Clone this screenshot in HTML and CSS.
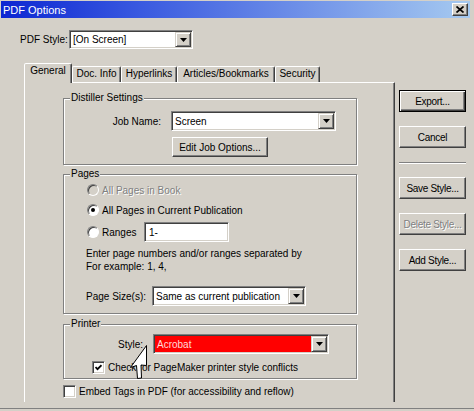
FILE: index.html
```html
<!DOCTYPE html>
<html>
<head>
<meta charset="utf-8">
<link rel="stylesheet" href="styles.css">
</head>
<body>
<div class="window">
  <div class="titlebar">
    <span class="title">PDF Options</span>
    <span class="close-btn"><svg width="8" height="7" viewBox="0 0 8 7"><path d="M0.5 0.5L7.5 6.5M7.5 0.5L0.5 6.5" stroke="#000" stroke-width="1.7" fill="none"/></svg></span>
  </div>

  <div class="style-row">
    <span class="lbl">PDF Style:</span>
    <div class="select sel-style">
      <span class="sel-text">[On Screen]</span>
      <span class="drop"><svg width="7" height="4" viewBox="0 0 7 4"><path d="M0 0H7L3.5 4Z" fill="#000"/></svg></span>
    </div>
  </div>

  <div class="main">
    <div class="tabs">
      <div class="tabstrip">
        <div class="tab active t-general">General</div>
        <div class="tab t-doc">Doc. Info</div>
        <div class="tab t-hyper">Hyperlinks</div>
        <div class="tab t-art">Articles/Bookmarks</div>
        <div class="tab t-sec">Security</div>
      </div>
      <div class="panel">
        <div class="group g-distiller">
          <div class="group-title">Distiller Settings</div>
          <div class="job-row">
            <span class="lbl-r">Job Name:</span>
            <div class="select sel-job">
              <span class="sel-text">Screen</span>
              <span class="drop"><svg width="7" height="4" viewBox="0 0 7 4"><path d="M0 0H7L3.5 4Z" fill="#000"/></svg></span>
            </div>
          </div>
          <div class="btn btn-edit">Edit Job Options...</div>
        </div>

        <div class="group g-pages">
          <div class="group-title">Pages</div>
          <div class="radio-row">
            <span class="radio disabled"></span>
            <span class="disabled-text">All Pages in Book</span>
          </div>
          <div class="radio-row">
            <span class="radio on"></span>
            <span>All Pages in Current Publication</span>
          </div>
          <div class="radio-row range-row">
            <span class="radio"></span>
            <span class="range-lbl">Ranges</span>
            <div class="inp inp-range">1-</div>
          </div>
          <div class="hint">Enter page numbers and/or ranges separated by<br>For example: 1, 4,</div>
          <div class="size-row">
            <span class="lbl size-lbl">Page Size(s):</span>
            <div class="select sel-size">
              <span class="sel-text">Same as current publication</span>
              <span class="drop"><svg width="7" height="4" viewBox="0 0 7 4"><path d="M0 0H7L3.5 4Z" fill="#000"/></svg></span>
            </div>
          </div>
        </div>

        <div class="group g-printer">
          <div class="group-title">Printer</div>
          <div class="pstyle-row">
            <span class="lbl-r pstyle-lbl">Style:</span>
            <div class="select sel-printer">
              <span class="sel-text">Acrobat</span>
              <span class="drop"><svg width="7" height="4" viewBox="0 0 7 4"><path d="M0 0H7L3.5 4Z" fill="#000"/></svg></span>
            </div>
          </div>
          <div class="check-row">
            <span class="check"><svg width="7" height="7" viewBox="0 0 7 7"><polyline points="0.5,3 2.5,5.2 6.5,1.2" stroke="#000" stroke-width="1.8" fill="none"/></svg></span>
            <span>Check for PageMaker printer style conflicts</span>
          </div>
        </div>

        <div class="embed-row">
          <span class="check"></span>
          <span>Embed Tags in PDF (for accessibility and reflow)</span>
        </div>
      </div>
    </div>

    <div class="side">
      <div class="btn default">Export...</div>
      <div class="btn">Cancel</div>
      <div class="sep"></div>
      <div class="btn">Save Style...</div>
      <div class="btn disabled-text">Delete Style...</div>
      <div class="btn">Add Style...</div>
    </div>
  </div>

  <svg class="cursor" width="20" height="36" viewBox="0 0 20 36"><polygon points="17.5,1.5 1.5,23.5 7.5,21.5 8.5,34.5 12.5,34 12,21 17.5,21.5" fill="#fff" stroke="#000" stroke-width="1"/></svg>
</div>
</body>
</html>
```

FILE: styles.css
```css
html, body {
  margin: 0;
  background: #d4d0c8;
}
body {
  font-family: "Liberation Sans", Arial, sans-serif;
  font-size: 10px;
  color: #000;
}
.window {
  position: relative;
  width: 474px;
  height: 409px;
  box-sizing: border-box;
  padding-top: 1px;
  border-bottom: 1px solid #808080;
  background: #d4d0c8;
}
.titlebar {
  height: 17px;
  margin: 0 4px 0 1px;
  background: linear-gradient(90deg, #0c26d2 0%, #3a5ae0 30%, #a6caf0 100%);
  display: flex;
  align-items: center;
  justify-content: space-between;
}
.title {
  color: #fff;
  font-size: 11px;
  padding-left: 2px;
}
.close-btn {
  width: 16px;
  height: 13px;
  box-sizing: border-box;
  margin-right: 2px;
  background: #d4d0c8;
  border: 1px solid;
  border-color: #fff #404040 #404040 #fff;
  box-shadow: inset -1px -1px 0 #808080;
  display: flex;
  align-items: center;
  justify-content: center;
}
.style-row {
  display: flex;
  align-items: center;
  height: 19px;
  margin: 12px 0 0 20px;
}
.style-row .lbl {
  width: 49px;
}
.select {
  display: flex;
  box-sizing: border-box;
  border: 1px solid;
  border-color: #808080 #fff #fff #808080;
  box-shadow: inset 1px 1px 0 #404040, inset -1px -1px 0 #d4d0c8;
  padding: 1px;
  background: #fff;
}
.sel-text {
  flex: 1;
  display: flex;
  align-items: center;
  padding-left: 2px;
  white-space: nowrap;
  overflow: hidden;
}
.drop {
  width: 16px;
  box-sizing: border-box;
  background: #d4d0c8;
  border: 1px solid;
  border-color: #d4d0c8 #404040 #404040 #d4d0c8;
  box-shadow: inset 1px 1px 0 #fff, inset -1px -1px 0 #808080;
  display: flex;
  align-items: center;
  justify-content: center;
}
.sel-style {
  width: 124px;
  height: 19px;
}
.main {
  display: flex;
  margin: 14px 0 0 24px;
}
.tabs {
  width: 371px;
}
.tabstrip {
  display: flex;
  align-items: flex-end;
  height: 19px;
}
.tab {
  box-sizing: border-box;
  height: 16px;
  border: 1px solid;
  border-bottom: none;
  border-color: #fff #404040 transparent #fff;
  box-shadow: inset -1px 0 0 #808080;
  border-radius: 2px 2px 0 0;
  text-align: center;
  line-height: 13px;
  white-space: nowrap;
}
.tab.active {
  height: 20px;
  margin-bottom: -1px;
  position: relative;
  z-index: 1;
  background: #d4d0c8;
  line-height: 12px;
  padding-top: 1px;
}
.t-general { width: 48px; }
.t-doc { width: 49px; }
.t-hyper { width: 56px; }
.t-art { width: 98px; }
.t-sec { width: 45px; }
.panel {
  height: 320px;
  box-sizing: border-box;
  border-top: 1px solid #fff;
  border-left: 1px solid #fff;
  border-right: 1px solid #404040;
  box-shadow: inset -1px 0 0 #808080;
}
.group {
  margin-left: 38px;
  width: 294px;
  box-sizing: border-box;
  border: 1px solid #808080;
  box-shadow: 1px 1px 0 #fff, inset 1px 1px 0 #fff;
}
.group-title {
  margin: -7px 0 0 6px;
  padding: 0 1px;
  background: #d4d0c8;
  width: fit-content;
  line-height: 12px;
}
.g-distiller {
  margin-top: 15px;
  padding-bottom: 7px;
}
.job-row {
  display: flex;
  align-items: center;
  margin-top: 7px;
}
.lbl-r {
  width: 97px;
  text-align: right;
  margin-right: 10px;
}
.sel-job {
  width: 165px;
  height: 20px;
}
.btn {
  box-sizing: border-box;
  display: flex;
  align-items: center;
  justify-content: center;
  background: #d4d0c8;
  border: 1px solid;
  border-color: #fff #404040 #404040 #fff;
  box-shadow: inset -1px -1px 0 #808080;
  white-space: nowrap;
}
.btn.default {
  border-color: #000;
  box-shadow: inset 1px 1px 0 #fff, inset -1px -1px 0 #404040, inset -2px -2px 0 #808080;
}
.btn-edit {
  margin: 6px 0 0 108px;
  width: 96px;
  height: 20px;
}
.g-pages {
  margin-top: 9px;
  padding-bottom: 7px;
}
.radio-row {
  display: flex;
  align-items: center;
  height: 20px;
  margin-left: 23px;
}
.range-row {
  margin-top: 2px;
}
.radio {
  width: 12px;
  height: 12px;
  box-sizing: border-box;
  border-radius: 50%;
  background: #fff;
  border: 1px solid;
  border-color: #808080 #fff #fff #808080;
  box-shadow: inset 1px 1px 0 #404040;
  display: flex;
  align-items: center;
  justify-content: center;
  margin-right: 3px;
}
.radio.disabled {
  background: #d4d0c8;
}
.radio.on::after {
  content: "";
  width: 4px;
  height: 4px;
  border-radius: 50%;
  background: #000;
}
.disabled-text {
  color: #808080;
  text-shadow: 1px 1px 0 #fff;
}
.range-lbl {
  width: 42px;
}
.inp {
  box-sizing: border-box;
  border: 1px solid;
  border-color: #808080 #fff #fff #808080;
  box-shadow: inset 1px 1px 0 #404040, inset -1px -1px 0 #d4d0c8;
  background: #fff;
  padding-left: 4px;
  display: flex;
  align-items: center;
}
.inp-range {
  width: 85px;
  height: 20px;
}
.hint {
  margin: 5px 0 0 22px;
  line-height: 13px;
}
.size-row {
  display: flex;
  align-items: center;
  margin: 13px 0 0 22px;
  height: 20px;
}
.size-lbl {
  width: 66px;
}
.sel-size {
  width: 154px;
  height: 20px;
}
.g-printer {
  margin-top: 10px;
  padding-bottom: 4px;
}
.pstyle-row {
  display: flex;
  align-items: center;
  margin-top: 4px;
}
.pstyle-lbl {
  width: 79px;
}
.sel-printer {
  width: 176px;
  height: 20px;
  background: #ff0000;
}
.sel-printer .sel-text {
  color: #ffd8d8;
}
.check-row {
  display: flex;
  align-items: center;
  height: 14px;
  margin: 6px 0 0 28px;
}
.check {
  width: 13px;
  height: 13px;
  box-sizing: border-box;
  background: #fff;
  border: 1px solid;
  border-color: #808080 #fff #fff #808080;
  box-shadow: inset 1px 1px 0 #404040, inset -1px -1px 0 #d4d0c8;
  margin-right: 3px;
  display: flex;
  align-items: center;
  justify-content: center;
}
.embed-row {
  display: flex;
  align-items: center;
  height: 13px;
  margin: 6px 0 0 38px;
}
.side {
  width: 67px;
  margin-left: 4px;
  padding-top: 27px;
  display: flex;
  flex-direction: column;
}
.side .btn {
  height: 22px;
  letter-spacing: -0.3px;
}
.side .btn + .btn {
  margin-top: 14px;
}
.sep {
  height: 0;
  border-top: 1px solid #808080;
  border-bottom: 1px solid #fff;
  margin-top: 14px;
}
.side .sep + .btn {
  margin-top: 13px;
}
.cursor {
  position: absolute;
  left: 129px;
  top: 344px;
}
```
